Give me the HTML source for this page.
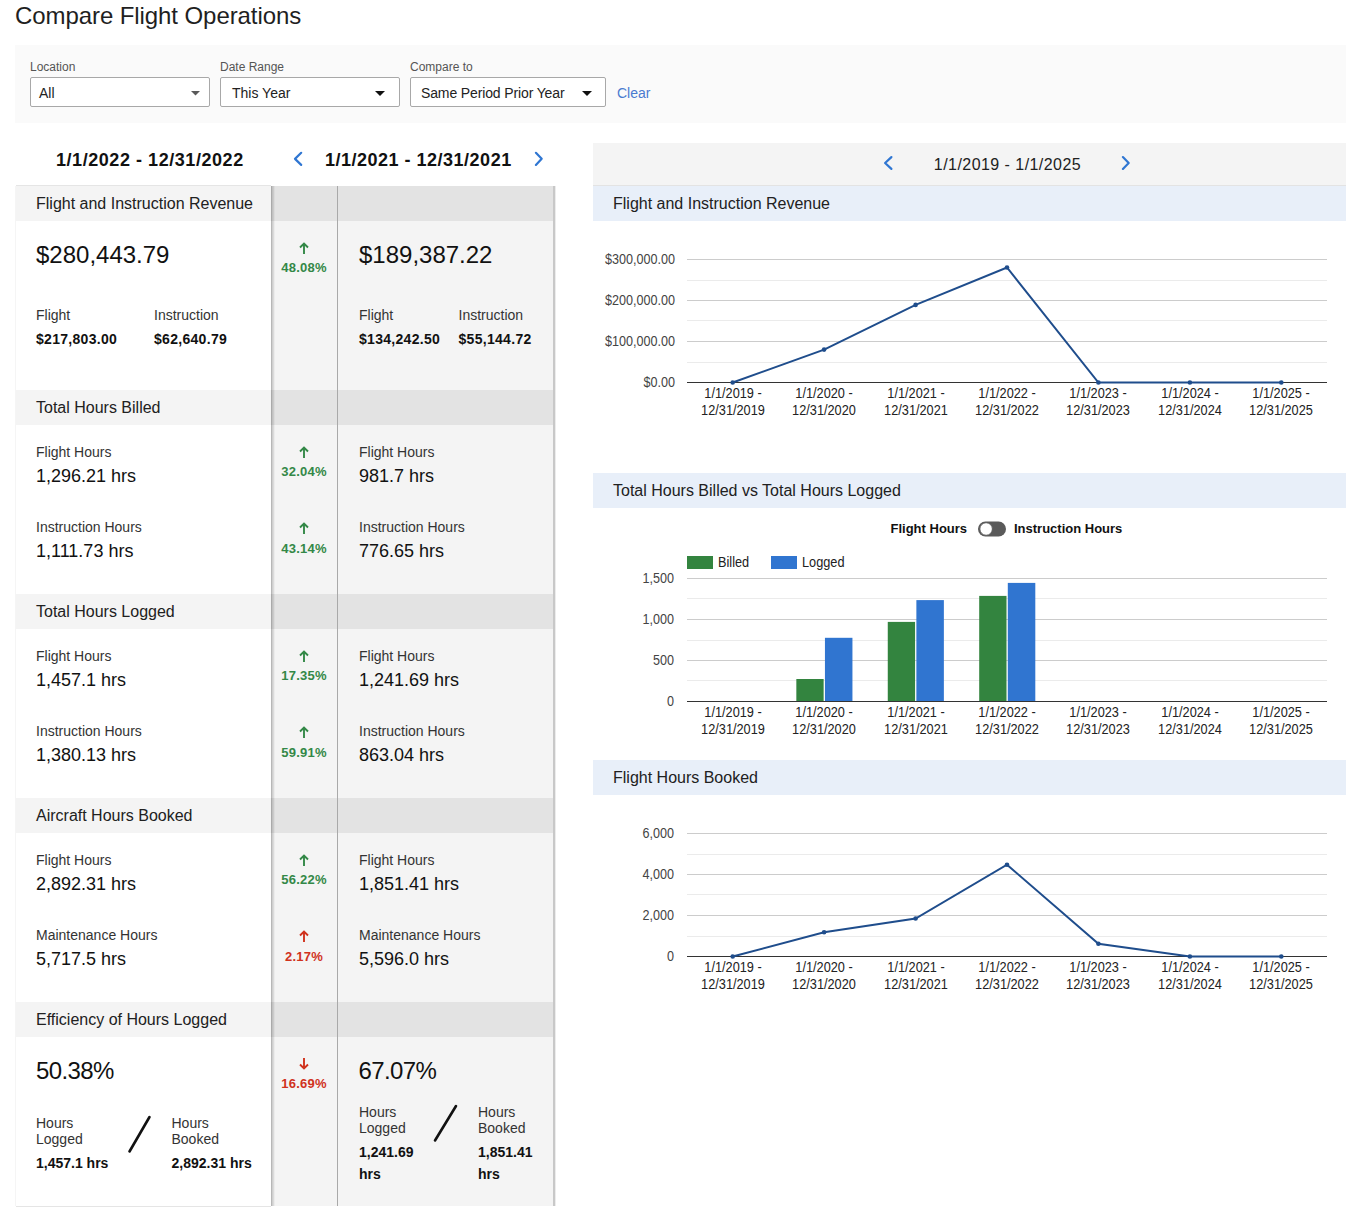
<!DOCTYPE html>
<html><head><meta charset="utf-8"><title>Compare Flight Operations</title>
<style>
html,body{margin:0;padding:0;background:#ffffff;}
body{width:1346px;height:1222px;position:relative;overflow:hidden;font-family:"Liberation Sans", sans-serif;}
.t{position:absolute;white-space:nowrap;}
.r{position:absolute;}
</style></head><body>
<svg class="r" style="left:0;top:0" width="1346" height="1222"><line x1="687" y1="362.5" x2="1327" y2="362.5" stroke="#ebebeb" stroke-width="1"/><line x1="687" y1="341.5" x2="1327" y2="341.5" stroke="#cccccc" stroke-width="1"/><line x1="687" y1="320.5" x2="1327" y2="320.5" stroke="#ebebeb" stroke-width="1"/><line x1="687" y1="300.5" x2="1327" y2="300.5" stroke="#cccccc" stroke-width="1"/><line x1="687" y1="280.5" x2="1327" y2="280.5" stroke="#ebebeb" stroke-width="1"/><line x1="687" y1="259.5" x2="1327" y2="259.5" stroke="#cccccc" stroke-width="1"/><line x1="687" y1="382.5" x2="1327" y2="382.5" stroke="#333333" stroke-width="1"/><polyline points="732.7,382.5 824.1,349.6 915.6,304.9 1007.0,267.5 1098.4,382.5 1189.9,382.5 1281.3,382.5" fill="none" stroke="#1f4d8c" stroke-width="2"/><circle cx="732.7" cy="382.5" r="2.3" fill="#1f4d8c"/><circle cx="824.1" cy="349.6" r="2.3" fill="#1f4d8c"/><circle cx="915.6" cy="304.9" r="2.3" fill="#1f4d8c"/><circle cx="1007.0" cy="267.5" r="2.3" fill="#1f4d8c"/><circle cx="1098.4" cy="382.5" r="2.3" fill="#1f4d8c"/><circle cx="1189.9" cy="382.5" r="2.3" fill="#1f4d8c"/><circle cx="1281.3" cy="382.5" r="2.3" fill="#1f4d8c"/><line x1="687" y1="680.5" x2="1327" y2="680.5" stroke="#ebebeb" stroke-width="1"/><line x1="687" y1="660.5" x2="1327" y2="660.5" stroke="#cccccc" stroke-width="1"/><line x1="687" y1="640.5" x2="1327" y2="640.5" stroke="#ebebeb" stroke-width="1"/><line x1="687" y1="619.5" x2="1327" y2="619.5" stroke="#cccccc" stroke-width="1"/><line x1="687" y1="598.5" x2="1327" y2="598.5" stroke="#ebebeb" stroke-width="1"/><line x1="687" y1="578.5" x2="1327" y2="578.5" stroke="#cccccc" stroke-width="1"/><rect x="796.34" y="679.0" width="27.3" height="22.0" fill="#33843f"/><rect x="824.94" y="637.8" width="27.5" height="63.2" fill="#3075d0"/><rect x="887.77" y="621.9" width="27.3" height="79.1" fill="#33843f"/><rect x="916.37" y="600.1" width="27.5" height="100.9" fill="#3075d0"/><rect x="979.20" y="595.9" width="27.3" height="105.1" fill="#33843f"/><rect x="1007.80" y="582.9" width="27.5" height="118.1" fill="#3075d0"/><line x1="687" y1="701.5" x2="1327" y2="701.5" stroke="#333333" stroke-width="1"/><rect x="687" y="556" width="26" height="13" fill="#33843f"/><rect x="771" y="556" width="26" height="13" fill="#3075d0"/><rect x="978" y="521.5" width="28" height="15" rx="7.5" fill="#5a5a5a"/><circle cx="986.1" cy="529" r="6.3" fill="#ffffff" stroke="#5a5a5a" stroke-width="1"/><line x1="687" y1="936.5" x2="1327" y2="936.5" stroke="#ebebeb" stroke-width="1"/><line x1="687" y1="915.5" x2="1327" y2="915.5" stroke="#cccccc" stroke-width="1"/><line x1="687" y1="894.5" x2="1327" y2="894.5" stroke="#ebebeb" stroke-width="1"/><line x1="687" y1="874.5" x2="1327" y2="874.5" stroke="#cccccc" stroke-width="1"/><line x1="687" y1="854.5" x2="1327" y2="854.5" stroke="#ebebeb" stroke-width="1"/><line x1="687" y1="833.5" x2="1327" y2="833.5" stroke="#cccccc" stroke-width="1"/><line x1="687" y1="956.5" x2="1327" y2="956.5" stroke="#333333" stroke-width="1"/><polyline points="732.7,956.5 824.1,932.3 915.6,918.5 1007.0,864.7 1098.4,943.7 1189.9,956.5 1281.3,956.5" fill="none" stroke="#1f4d8c" stroke-width="2"/><circle cx="732.7" cy="956.5" r="2.3" fill="#1f4d8c"/><circle cx="824.1" cy="932.3" r="2.3" fill="#1f4d8c"/><circle cx="915.6" cy="918.5" r="2.3" fill="#1f4d8c"/><circle cx="1007.0" cy="864.7" r="2.3" fill="#1f4d8c"/><circle cx="1098.4" cy="943.7" r="2.3" fill="#1f4d8c"/><circle cx="1189.9" cy="956.5" r="2.3" fill="#1f4d8c"/><circle cx="1281.3" cy="956.5" r="2.3" fill="#1f4d8c"/></svg>
<div class="t" style="left:15px;top:4.48px;font-size:24px;line-height:24px;font-weight:400;color:#1f1f1f;letter-spacing:-0.08px;">Compare Flight Operations</div><div class="r" style="left:15px;top:45px;width:1331px;height:78px;background:#fafafa;"></div><div class="t" style="left:30px;top:60.84px;font-size:12px;line-height:12px;font-weight:400;color:#555555;">Location</div><div class="r" style="left:30px;top:77px;width:180px;height:30px;background:#ffffff;box-sizing:border-box;border:1px solid #a8a8a8;border-radius:2px;"></div><div class="t" style="left:39px;top:85.65px;font-size:14px;line-height:14px;font-weight:400;color:#222222;">All</div><svg class="r" style="left:191px;top:91px" width="9" height="4.6"><path d="M0 0H9L4.5 4.6Z" fill="#5a5a5a"/></svg><div class="t" style="left:220px;top:60.84px;font-size:12px;line-height:12px;font-weight:400;color:#555555;">Date Range</div><div class="r" style="left:220px;top:77px;width:180px;height:30px;background:#ffffff;box-sizing:border-box;border:1px solid #a8a8a8;border-radius:2px;"></div><div class="t" style="left:232px;top:85.65px;font-size:14px;line-height:14px;font-weight:400;color:#222222;">This Year</div><svg class="r" style="left:375px;top:91px" width="10" height="5"><path d="M0 0H10L5.0 5Z" fill="#111111"/></svg><div class="t" style="left:410px;top:60.84px;font-size:12px;line-height:12px;font-weight:400;color:#555555;">Compare to</div><div class="r" style="left:410px;top:77px;width:196px;height:30px;background:#ffffff;box-sizing:border-box;border:1px solid #a8a8a8;border-radius:2px;"></div><div class="t" style="left:421px;top:85.65px;font-size:14px;line-height:14px;font-weight:400;color:#222222;letter-spacing:-0.13px;">Same Period Prior Year</div><svg class="r" style="left:582px;top:91px" width="10" height="5"><path d="M0 0H10L5.0 5Z" fill="#111111"/></svg><div class="t" style="left:617px;top:85.65px;font-size:14px;line-height:14px;font-weight:400;color:#4a7bd0;">Clear</div><div class="t" style="left:56px;top:151.06px;font-size:18px;line-height:18px;font-weight:700;color:#111111;letter-spacing:0.55px;">1/1/2022 - 12/31/2022</div><svg class="r" style="left:0;top:0;overflow:visible" width="1" height="1"><polyline points="301.2,152.8 295,158.85000000000002 301.2,164.9" fill="none" stroke="#2f76d2" stroke-width="2.2" stroke-linecap="round" stroke-linejoin="round"/></svg><div class="t" style="left:325px;top:151.06px;font-size:18px;line-height:18px;font-weight:700;color:#111111;letter-spacing:0.5px;">1/1/2021 - 12/31/2021</div><svg class="r" style="left:0;top:0;overflow:visible" width="1" height="1"><polyline points="535.9,152.8 541.7,158.85000000000002 535.9,164.9" fill="none" stroke="#2f76d2" stroke-width="2.2" stroke-linecap="round" stroke-linejoin="round"/></svg><div class="r" style="left:271px;top:186px;width:283px;height:1020px;background:#f4f4f4;"></div><div class="r" style="left:271px;top:186px;width:283px;height:35px;background:#e3e3e3;"></div><div class="r" style="left:271px;top:390px;width:283px;height:35px;background:#e3e3e3;"></div><div class="r" style="left:271px;top:594px;width:283px;height:35px;background:#e3e3e3;"></div><div class="r" style="left:271px;top:798px;width:283px;height:35px;background:#e3e3e3;"></div><div class="r" style="left:271px;top:1002px;width:283px;height:35px;background:#e3e3e3;"></div><div class="r" style="left:337px;top:186px;width:1px;height:1020px;background:#a9a9a9;"></div><div class="r" style="left:553px;top:186px;width:2px;height:1020px;background:#c8c8c8;"></div><div class="r" style="left:555px;top:186px;width:1px;height:1020px;background:#ececec;"></div><div class="r" style="left:16px;top:186px;width:255px;height:1020px;background:#ffffff;"></div><div class="r" style="left:16px;top:186px;width:255px;height:35px;background:#f4f4f4;"></div><div class="r" style="left:16px;top:390px;width:255px;height:35px;background:#f4f4f4;"></div><div class="r" style="left:16px;top:594px;width:255px;height:35px;background:#f4f4f4;"></div><div class="r" style="left:16px;top:798px;width:255px;height:35px;background:#f4f4f4;"></div><div class="r" style="left:16px;top:1002px;width:255px;height:35px;background:#f4f4f4;"></div><div class="r" style="left:16px;top:185px;width:255px;height:1px;background:rgba(0,0,0,0.10);"></div><div class="r" style="left:16px;top:1206px;width:255px;height:1px;background:rgba(0,0,0,0.10);"></div><div class="r" style="left:15px;top:186px;width:1px;height:1020px;background:rgba(0,0,0,0.04);"></div><div class="r" style="left:271px;top:186px;width:1px;height:1020px;background:rgba(0,0,0,0.25);"></div><div class="r" style="left:272px;top:186px;width:1px;height:1020px;background:rgba(0,0,0,0.15);"></div><div class="r" style="left:273px;top:186px;width:1px;height:1020px;background:rgba(0,0,0,0.1);"></div><div class="r" style="left:274px;top:186px;width:1px;height:1020px;background:rgba(0,0,0,0.03);"></div><div class="t" style="left:36px;top:195.66px;font-size:16px;line-height:16px;font-weight:400;color:#212121;">Flight and Instruction Revenue</div><div class="t" style="left:36px;top:399.66px;font-size:16px;line-height:16px;font-weight:400;color:#212121;">Total Hours Billed</div><div class="t" style="left:36px;top:603.66px;font-size:16px;line-height:16px;font-weight:400;color:#212121;">Total Hours Logged</div><div class="t" style="left:36px;top:807.66px;font-size:16px;line-height:16px;font-weight:400;color:#212121;">Aircraft Hours Booked</div><div class="t" style="left:36px;top:1011.66px;font-size:16px;line-height:16px;font-weight:400;color:#212121;">Efficiency of Hours Logged</div><div class="t" style="left:36px;top:242.68px;font-size:24px;line-height:24px;font-weight:400;color:#111111;">$280,443.79</div><div class="t" style="left:36px;top:308.15px;font-size:14px;line-height:14px;font-weight:400;color:#333333;">Flight</div><div class="t" style="left:154px;top:308.15px;font-size:14px;line-height:14px;font-weight:400;color:#333333;">Instruction</div><div class="t" style="left:36px;top:331.75px;font-size:14px;line-height:14px;font-weight:700;color:#111111;letter-spacing:0.3px;">$217,803.00</div><div class="t" style="left:154px;top:331.75px;font-size:14px;line-height:14px;font-weight:700;color:#111111;letter-spacing:0.3px;">$62,640.79</div><svg class="r" style="left:299px;top:242px" width="10" height="12"><path d="M5 12V1.6 M1 5.5L5 1.5L9 5.5" fill="none" stroke="#338847" stroke-width="1.9" stroke-linejoin="miter"/></svg><div class="t" style="left:4px;width:600px;text-align:center;top:260.60px;font-size:13px;line-height:13px;font-weight:700;color:#338847;letter-spacing:0.2px;">48.08%</div><div class="t" style="left:359px;top:242.68px;font-size:24px;line-height:24px;font-weight:400;color:#111111;">$189,387.22</div><div class="t" style="left:359px;top:308.15px;font-size:14px;line-height:14px;font-weight:400;color:#333333;">Flight</div><div class="t" style="left:458.5px;top:308.15px;font-size:14px;line-height:14px;font-weight:400;color:#333333;">Instruction</div><div class="t" style="left:359px;top:331.75px;font-size:14px;line-height:14px;font-weight:700;color:#111111;letter-spacing:0.3px;">$134,242.50</div><div class="t" style="left:458.5px;top:331.75px;font-size:14px;line-height:14px;font-weight:700;color:#111111;letter-spacing:0.3px;">$55,144.72</div><div class="t" style="left:36px;top:444.95px;font-size:14px;line-height:14px;font-weight:400;color:#333333;">Flight Hours</div><div class="t" style="left:36px;top:466.76px;font-size:18px;line-height:18px;font-weight:400;color:#111111;">1,296.21 hrs</div><div class="t" style="left:36px;top:520.05px;font-size:14px;line-height:14px;font-weight:400;color:#333333;">Instruction Hours</div><div class="t" style="left:36px;top:541.66px;font-size:18px;line-height:18px;font-weight:400;color:#111111;">1,111.73 hrs</div><div class="t" style="left:359px;top:444.95px;font-size:14px;line-height:14px;font-weight:400;color:#333333;">Flight Hours</div><div class="t" style="left:359px;top:466.76px;font-size:18px;line-height:18px;font-weight:400;color:#111111;">981.7 hrs</div><div class="t" style="left:359px;top:520.05px;font-size:14px;line-height:14px;font-weight:400;color:#333333;">Instruction Hours</div><div class="t" style="left:359px;top:541.66px;font-size:18px;line-height:18px;font-weight:400;color:#111111;">776.65 hrs</div><svg class="r" style="left:299px;top:446.4px" width="10" height="12"><path d="M5 12V1.6 M1 5.5L5 1.5L9 5.5" fill="none" stroke="#338847" stroke-width="1.9" stroke-linejoin="miter"/></svg><div class="t" style="left:4px;width:600px;text-align:center;top:465.30px;font-size:13px;line-height:13px;font-weight:700;color:#338847;letter-spacing:0.2px;">32.04%</div><svg class="r" style="left:299px;top:522.3px" width="10" height="12"><path d="M5 12V1.6 M1 5.5L5 1.5L9 5.5" fill="none" stroke="#338847" stroke-width="1.9" stroke-linejoin="miter"/></svg><div class="t" style="left:4px;width:600px;text-align:center;top:541.70px;font-size:13px;line-height:13px;font-weight:700;color:#338847;letter-spacing:0.2px;">43.14%</div><div class="t" style="left:36px;top:648.95px;font-size:14px;line-height:14px;font-weight:400;color:#333333;">Flight Hours</div><div class="t" style="left:36px;top:670.76px;font-size:18px;line-height:18px;font-weight:400;color:#111111;">1,457.1 hrs</div><div class="t" style="left:36px;top:724.05px;font-size:14px;line-height:14px;font-weight:400;color:#333333;">Instruction Hours</div><div class="t" style="left:36px;top:745.66px;font-size:18px;line-height:18px;font-weight:400;color:#111111;">1,380.13 hrs</div><div class="t" style="left:359px;top:648.95px;font-size:14px;line-height:14px;font-weight:400;color:#333333;">Flight Hours</div><div class="t" style="left:359px;top:670.76px;font-size:18px;line-height:18px;font-weight:400;color:#111111;">1,241.69 hrs</div><div class="t" style="left:359px;top:724.05px;font-size:14px;line-height:14px;font-weight:400;color:#333333;">Instruction Hours</div><div class="t" style="left:359px;top:745.66px;font-size:18px;line-height:18px;font-weight:400;color:#111111;">863.04 hrs</div><svg class="r" style="left:299px;top:650.4px" width="10" height="12"><path d="M5 12V1.6 M1 5.5L5 1.5L9 5.5" fill="none" stroke="#338847" stroke-width="1.9" stroke-linejoin="miter"/></svg><div class="t" style="left:4px;width:600px;text-align:center;top:669.30px;font-size:13px;line-height:13px;font-weight:700;color:#338847;letter-spacing:0.2px;">17.35%</div><svg class="r" style="left:299px;top:726.3px" width="10" height="12"><path d="M5 12V1.6 M1 5.5L5 1.5L9 5.5" fill="none" stroke="#338847" stroke-width="1.9" stroke-linejoin="miter"/></svg><div class="t" style="left:4px;width:600px;text-align:center;top:745.70px;font-size:13px;line-height:13px;font-weight:700;color:#338847;letter-spacing:0.2px;">59.91%</div><div class="t" style="left:36px;top:852.95px;font-size:14px;line-height:14px;font-weight:400;color:#333333;">Flight Hours</div><div class="t" style="left:36px;top:874.76px;font-size:18px;line-height:18px;font-weight:400;color:#111111;">2,892.31 hrs</div><div class="t" style="left:36px;top:928.05px;font-size:14px;line-height:14px;font-weight:400;color:#333333;">Maintenance Hours</div><div class="t" style="left:36px;top:949.66px;font-size:18px;line-height:18px;font-weight:400;color:#111111;">5,717.5 hrs</div><div class="t" style="left:359px;top:852.95px;font-size:14px;line-height:14px;font-weight:400;color:#333333;">Flight Hours</div><div class="t" style="left:359px;top:874.76px;font-size:18px;line-height:18px;font-weight:400;color:#111111;">1,851.41 hrs</div><div class="t" style="left:359px;top:928.05px;font-size:14px;line-height:14px;font-weight:400;color:#333333;">Maintenance Hours</div><div class="t" style="left:359px;top:949.66px;font-size:18px;line-height:18px;font-weight:400;color:#111111;">5,596.0 hrs</div><svg class="r" style="left:299px;top:854.4px" width="10" height="12"><path d="M5 12V1.6 M1 5.5L5 1.5L9 5.5" fill="none" stroke="#338847" stroke-width="1.9" stroke-linejoin="miter"/></svg><div class="t" style="left:4px;width:600px;text-align:center;top:873.30px;font-size:13px;line-height:13px;font-weight:700;color:#338847;letter-spacing:0.2px;">56.22%</div><svg class="r" style="left:299px;top:930.3px" width="10" height="12"><path d="M5 12V1.6 M1 5.5L5 1.5L9 5.5" fill="none" stroke="#d0321d" stroke-width="1.9" stroke-linejoin="miter"/></svg><div class="t" style="left:4px;width:600px;text-align:center;top:949.70px;font-size:13px;line-height:13px;font-weight:700;color:#d0321d;letter-spacing:0.2px;">2.17%</div><div class="t" style="left:36px;top:1058.88px;font-size:24px;line-height:24px;font-weight:400;color:#111111;letter-spacing:-0.6px;">50.38%</div><div class="t" style="left:36px;top:1115.85px;font-size:14px;line-height:14px;font-weight:400;color:#333333;">Hours</div><div class="t" style="left:36px;top:1131.65px;font-size:14px;line-height:14px;font-weight:400;color:#333333;">Logged</div><div class="t" style="left:36px;top:1155.95px;font-size:14px;line-height:14px;font-weight:700;color:#111111;">1,457.1 hrs</div><div class="t" style="left:171.5px;top:1115.85px;font-size:14px;line-height:14px;font-weight:400;color:#333333;">Hours</div><div class="t" style="left:171.5px;top:1131.65px;font-size:14px;line-height:14px;font-weight:400;color:#333333;">Booked</div><div class="t" style="left:171.5px;top:1155.95px;font-size:14px;line-height:14px;font-weight:700;color:#111111;">2,892.31 hrs</div><svg class="r" style="left:120px;top:1110px" width="40" height="50"><line x1="9.5" y1="41.5" x2="29.5" y2="7" stroke="#111" stroke-width="2.6" stroke-linecap="round"/></svg><svg class="r" style="left:299px;top:1058.3px" width="10" height="12"><path d="M5 0V10.4 M1 6.5L5 10.5L9 6.5" fill="none" stroke="#d0321d" stroke-width="1.9" stroke-linejoin="miter"/></svg><div class="t" style="left:4px;width:600px;text-align:center;top:1076.80px;font-size:13px;line-height:13px;font-weight:700;color:#d0321d;letter-spacing:0.2px;">16.69%</div><div class="t" style="left:358.5px;top:1059.08px;font-size:24px;line-height:24px;font-weight:400;color:#111111;letter-spacing:-0.6px;">67.07%</div><div class="t" style="left:359px;top:1104.65px;font-size:14px;line-height:14px;font-weight:400;color:#333333;">Hours</div><div class="t" style="left:359px;top:1120.85px;font-size:14px;line-height:14px;font-weight:400;color:#333333;">Logged</div><div class="t" style="left:359px;top:1144.95px;font-size:14px;line-height:14px;font-weight:700;color:#111111;">1,241.69</div><div class="t" style="left:359px;top:1167.45px;font-size:14px;line-height:14px;font-weight:700;color:#111111;">hrs</div><div class="t" style="left:478px;top:1104.65px;font-size:14px;line-height:14px;font-weight:400;color:#333333;">Hours</div><div class="t" style="left:478px;top:1120.85px;font-size:14px;line-height:14px;font-weight:400;color:#333333;">Booked</div><div class="t" style="left:478px;top:1144.95px;font-size:14px;line-height:14px;font-weight:700;color:#111111;">1,851.41</div><div class="t" style="left:478px;top:1167.45px;font-size:14px;line-height:14px;font-weight:700;color:#111111;">hrs</div><svg class="r" style="left:425px;top:1099px" width="40" height="50"><line x1="10" y1="41.5" x2="31" y2="7" stroke="#111" stroke-width="2.6" stroke-linecap="round"/></svg><div class="r" style="left:593px;top:143px;width:753px;height:42px;background:#f4f4f4;"></div><div class="r" style="left:593px;top:185px;width:753px;height:1px;background:#e3e3e3;"></div><svg class="r" style="left:0;top:0;overflow:visible" width="1" height="1"><polyline points="891.4,157.1 885.1,163.0 891.4,168.9" fill="none" stroke="#2f76d2" stroke-width="2.2" stroke-linecap="round" stroke-linejoin="round"/></svg><div class="t" style="left:707.5px;width:600px;text-align:center;top:157.26px;font-size:16px;line-height:16px;font-weight:400;color:#212121;letter-spacing:0.45px;">1/1/2019 - 1/1/2025</div><svg class="r" style="left:0;top:0;overflow:visible" width="1" height="1"><polyline points="1122.9,157.1 1128.7,163.0 1122.9,168.9" fill="none" stroke="#2f76d2" stroke-width="2.2" stroke-linecap="round" stroke-linejoin="round"/></svg><div class="r" style="left:593px;top:186px;width:753px;height:35px;background:#e8eff9;"></div><div class="t" style="left:613px;top:195.66px;font-size:16px;line-height:16px;font-weight:400;color:#212121;">Flight and Instruction Revenue</div><div class="r" style="left:593px;top:473px;width:753px;height:35px;background:#e8eff9;"></div><div class="t" style="left:613px;top:482.66px;font-size:16px;line-height:16px;font-weight:400;color:#212121;">Total Hours Billed vs Total Hours Logged</div><div class="r" style="left:593px;top:760px;width:753px;height:35px;background:#e8eff9;"></div><div class="t" style="left:613px;top:769.66px;font-size:16px;line-height:16px;font-weight:400;color:#212121;">Flight Hours Booked</div><div class="t" style="left:75px;width:600px;text-align:right;top:374.75px;font-size:14px;line-height:14px;font-weight:400;color:#444444;transform:scaleX(0.9);transform-origin:100% 50%;">$0.00</div><div class="t" style="left:75px;width:600px;text-align:right;top:333.75px;font-size:14px;line-height:14px;font-weight:400;color:#444444;transform:scaleX(0.9);transform-origin:100% 50%;">$100,000.00</div><div class="t" style="left:75px;width:600px;text-align:right;top:292.75px;font-size:14px;line-height:14px;font-weight:400;color:#444444;transform:scaleX(0.9);transform-origin:100% 50%;">$200,000.00</div><div class="t" style="left:75px;width:600px;text-align:right;top:251.75px;font-size:14px;line-height:14px;font-weight:400;color:#444444;transform:scaleX(0.9);transform-origin:100% 50%;">$300,000.00</div><div class="t" style="left:432.71428571428567px;width:600px;text-align:center;top:386.35px;font-size:14px;line-height:14px;font-weight:400;color:#222222;transform:scaleX(0.91);transform-origin:50% 50%;">1/1/2019 -</div><div class="t" style="left:432.71428571428567px;width:600px;text-align:center;top:402.75px;font-size:14px;line-height:14px;font-weight:400;color:#222222;transform:scaleX(0.91);transform-origin:50% 50%;">12/31/2019</div><div class="t" style="left:524.1428571428571px;width:600px;text-align:center;top:386.35px;font-size:14px;line-height:14px;font-weight:400;color:#222222;transform:scaleX(0.91);transform-origin:50% 50%;">1/1/2020 -</div><div class="t" style="left:524.1428571428571px;width:600px;text-align:center;top:402.75px;font-size:14px;line-height:14px;font-weight:400;color:#222222;transform:scaleX(0.91);transform-origin:50% 50%;">12/31/2020</div><div class="t" style="left:615.5714285714286px;width:600px;text-align:center;top:386.35px;font-size:14px;line-height:14px;font-weight:400;color:#222222;transform:scaleX(0.91);transform-origin:50% 50%;">1/1/2021 -</div><div class="t" style="left:615.5714285714286px;width:600px;text-align:center;top:402.75px;font-size:14px;line-height:14px;font-weight:400;color:#222222;transform:scaleX(0.91);transform-origin:50% 50%;">12/31/2021</div><div class="t" style="left:707.0px;width:600px;text-align:center;top:386.35px;font-size:14px;line-height:14px;font-weight:400;color:#222222;transform:scaleX(0.91);transform-origin:50% 50%;">1/1/2022 -</div><div class="t" style="left:707.0px;width:600px;text-align:center;top:402.75px;font-size:14px;line-height:14px;font-weight:400;color:#222222;transform:scaleX(0.91);transform-origin:50% 50%;">12/31/2022</div><div class="t" style="left:798.4285714285713px;width:600px;text-align:center;top:386.35px;font-size:14px;line-height:14px;font-weight:400;color:#222222;transform:scaleX(0.91);transform-origin:50% 50%;">1/1/2023 -</div><div class="t" style="left:798.4285714285713px;width:600px;text-align:center;top:402.75px;font-size:14px;line-height:14px;font-weight:400;color:#222222;transform:scaleX(0.91);transform-origin:50% 50%;">12/31/2023</div><div class="t" style="left:889.8571428571429px;width:600px;text-align:center;top:386.35px;font-size:14px;line-height:14px;font-weight:400;color:#222222;transform:scaleX(0.91);transform-origin:50% 50%;">1/1/2024 -</div><div class="t" style="left:889.8571428571429px;width:600px;text-align:center;top:402.75px;font-size:14px;line-height:14px;font-weight:400;color:#222222;transform:scaleX(0.91);transform-origin:50% 50%;">12/31/2024</div><div class="t" style="left:981.2857142857142px;width:600px;text-align:center;top:386.35px;font-size:14px;line-height:14px;font-weight:400;color:#222222;transform:scaleX(0.91);transform-origin:50% 50%;">1/1/2025 -</div><div class="t" style="left:981.2857142857142px;width:600px;text-align:center;top:402.75px;font-size:14px;line-height:14px;font-weight:400;color:#222222;transform:scaleX(0.91);transform-origin:50% 50%;">12/31/2025</div><div class="t" style="left:73.5px;width:600px;text-align:right;top:693.75px;font-size:14px;line-height:14px;font-weight:400;color:#444444;transform:scaleX(0.9);transform-origin:100% 50%;">0</div><div class="t" style="left:73.5px;width:600px;text-align:right;top:652.75px;font-size:14px;line-height:14px;font-weight:400;color:#444444;transform:scaleX(0.9);transform-origin:100% 50%;">500</div><div class="t" style="left:73.5px;width:600px;text-align:right;top:611.75px;font-size:14px;line-height:14px;font-weight:400;color:#444444;transform:scaleX(0.9);transform-origin:100% 50%;">1,000</div><div class="t" style="left:73.5px;width:600px;text-align:right;top:570.75px;font-size:14px;line-height:14px;font-weight:400;color:#444444;transform:scaleX(0.9);transform-origin:100% 50%;">1,500</div><div class="t" style="left:432.71428571428567px;width:600px;text-align:center;top:705.35px;font-size:14px;line-height:14px;font-weight:400;color:#222222;transform:scaleX(0.91);transform-origin:50% 50%;">1/1/2019 -</div><div class="t" style="left:432.71428571428567px;width:600px;text-align:center;top:721.75px;font-size:14px;line-height:14px;font-weight:400;color:#222222;transform:scaleX(0.91);transform-origin:50% 50%;">12/31/2019</div><div class="t" style="left:524.1428571428571px;width:600px;text-align:center;top:705.35px;font-size:14px;line-height:14px;font-weight:400;color:#222222;transform:scaleX(0.91);transform-origin:50% 50%;">1/1/2020 -</div><div class="t" style="left:524.1428571428571px;width:600px;text-align:center;top:721.75px;font-size:14px;line-height:14px;font-weight:400;color:#222222;transform:scaleX(0.91);transform-origin:50% 50%;">12/31/2020</div><div class="t" style="left:615.5714285714286px;width:600px;text-align:center;top:705.35px;font-size:14px;line-height:14px;font-weight:400;color:#222222;transform:scaleX(0.91);transform-origin:50% 50%;">1/1/2021 -</div><div class="t" style="left:615.5714285714286px;width:600px;text-align:center;top:721.75px;font-size:14px;line-height:14px;font-weight:400;color:#222222;transform:scaleX(0.91);transform-origin:50% 50%;">12/31/2021</div><div class="t" style="left:707.0px;width:600px;text-align:center;top:705.35px;font-size:14px;line-height:14px;font-weight:400;color:#222222;transform:scaleX(0.91);transform-origin:50% 50%;">1/1/2022 -</div><div class="t" style="left:707.0px;width:600px;text-align:center;top:721.75px;font-size:14px;line-height:14px;font-weight:400;color:#222222;transform:scaleX(0.91);transform-origin:50% 50%;">12/31/2022</div><div class="t" style="left:798.4285714285713px;width:600px;text-align:center;top:705.35px;font-size:14px;line-height:14px;font-weight:400;color:#222222;transform:scaleX(0.91);transform-origin:50% 50%;">1/1/2023 -</div><div class="t" style="left:798.4285714285713px;width:600px;text-align:center;top:721.75px;font-size:14px;line-height:14px;font-weight:400;color:#222222;transform:scaleX(0.91);transform-origin:50% 50%;">12/31/2023</div><div class="t" style="left:889.8571428571429px;width:600px;text-align:center;top:705.35px;font-size:14px;line-height:14px;font-weight:400;color:#222222;transform:scaleX(0.91);transform-origin:50% 50%;">1/1/2024 -</div><div class="t" style="left:889.8571428571429px;width:600px;text-align:center;top:721.75px;font-size:14px;line-height:14px;font-weight:400;color:#222222;transform:scaleX(0.91);transform-origin:50% 50%;">12/31/2024</div><div class="t" style="left:981.2857142857142px;width:600px;text-align:center;top:705.35px;font-size:14px;line-height:14px;font-weight:400;color:#222222;transform:scaleX(0.91);transform-origin:50% 50%;">1/1/2025 -</div><div class="t" style="left:981.2857142857142px;width:600px;text-align:center;top:721.75px;font-size:14px;line-height:14px;font-weight:400;color:#222222;transform:scaleX(0.91);transform-origin:50% 50%;">12/31/2025</div><div class="t" style="left:718px;top:555.35px;font-size:14px;line-height:14px;font-weight:400;color:#222222;transform:scaleX(0.91);transform-origin:0 50%;">Billed</div><div class="t" style="left:802px;top:555.35px;font-size:14px;line-height:14px;font-weight:400;color:#222222;transform:scaleX(0.91);transform-origin:0 50%;">Logged</div><div class="t" style="left:890.5px;top:521.80px;font-size:13px;line-height:13px;font-weight:700;color:#111111;">Flight Hours</div><div class="t" style="left:1014px;top:521.80px;font-size:13px;line-height:13px;font-weight:700;color:#111111;">Instruction Hours</div><div class="t" style="left:73.5px;width:600px;text-align:right;top:948.75px;font-size:14px;line-height:14px;font-weight:400;color:#444444;transform:scaleX(0.9);transform-origin:100% 50%;">0</div><div class="t" style="left:73.5px;width:600px;text-align:right;top:907.75px;font-size:14px;line-height:14px;font-weight:400;color:#444444;transform:scaleX(0.9);transform-origin:100% 50%;">2,000</div><div class="t" style="left:73.5px;width:600px;text-align:right;top:866.75px;font-size:14px;line-height:14px;font-weight:400;color:#444444;transform:scaleX(0.9);transform-origin:100% 50%;">4,000</div><div class="t" style="left:73.5px;width:600px;text-align:right;top:825.75px;font-size:14px;line-height:14px;font-weight:400;color:#444444;transform:scaleX(0.9);transform-origin:100% 50%;">6,000</div><div class="t" style="left:432.71428571428567px;width:600px;text-align:center;top:960.35px;font-size:14px;line-height:14px;font-weight:400;color:#222222;transform:scaleX(0.91);transform-origin:50% 50%;">1/1/2019 -</div><div class="t" style="left:432.71428571428567px;width:600px;text-align:center;top:976.75px;font-size:14px;line-height:14px;font-weight:400;color:#222222;transform:scaleX(0.91);transform-origin:50% 50%;">12/31/2019</div><div class="t" style="left:524.1428571428571px;width:600px;text-align:center;top:960.35px;font-size:14px;line-height:14px;font-weight:400;color:#222222;transform:scaleX(0.91);transform-origin:50% 50%;">1/1/2020 -</div><div class="t" style="left:524.1428571428571px;width:600px;text-align:center;top:976.75px;font-size:14px;line-height:14px;font-weight:400;color:#222222;transform:scaleX(0.91);transform-origin:50% 50%;">12/31/2020</div><div class="t" style="left:615.5714285714286px;width:600px;text-align:center;top:960.35px;font-size:14px;line-height:14px;font-weight:400;color:#222222;transform:scaleX(0.91);transform-origin:50% 50%;">1/1/2021 -</div><div class="t" style="left:615.5714285714286px;width:600px;text-align:center;top:976.75px;font-size:14px;line-height:14px;font-weight:400;color:#222222;transform:scaleX(0.91);transform-origin:50% 50%;">12/31/2021</div><div class="t" style="left:707.0px;width:600px;text-align:center;top:960.35px;font-size:14px;line-height:14px;font-weight:400;color:#222222;transform:scaleX(0.91);transform-origin:50% 50%;">1/1/2022 -</div><div class="t" style="left:707.0px;width:600px;text-align:center;top:976.75px;font-size:14px;line-height:14px;font-weight:400;color:#222222;transform:scaleX(0.91);transform-origin:50% 50%;">12/31/2022</div><div class="t" style="left:798.4285714285713px;width:600px;text-align:center;top:960.35px;font-size:14px;line-height:14px;font-weight:400;color:#222222;transform:scaleX(0.91);transform-origin:50% 50%;">1/1/2023 -</div><div class="t" style="left:798.4285714285713px;width:600px;text-align:center;top:976.75px;font-size:14px;line-height:14px;font-weight:400;color:#222222;transform:scaleX(0.91);transform-origin:50% 50%;">12/31/2023</div><div class="t" style="left:889.8571428571429px;width:600px;text-align:center;top:960.35px;font-size:14px;line-height:14px;font-weight:400;color:#222222;transform:scaleX(0.91);transform-origin:50% 50%;">1/1/2024 -</div><div class="t" style="left:889.8571428571429px;width:600px;text-align:center;top:976.75px;font-size:14px;line-height:14px;font-weight:400;color:#222222;transform:scaleX(0.91);transform-origin:50% 50%;">12/31/2024</div><div class="t" style="left:981.2857142857142px;width:600px;text-align:center;top:960.35px;font-size:14px;line-height:14px;font-weight:400;color:#222222;transform:scaleX(0.91);transform-origin:50% 50%;">1/1/2025 -</div><div class="t" style="left:981.2857142857142px;width:600px;text-align:center;top:976.75px;font-size:14px;line-height:14px;font-weight:400;color:#222222;transform:scaleX(0.91);transform-origin:50% 50%;">12/31/2025</div>
</body></html>
